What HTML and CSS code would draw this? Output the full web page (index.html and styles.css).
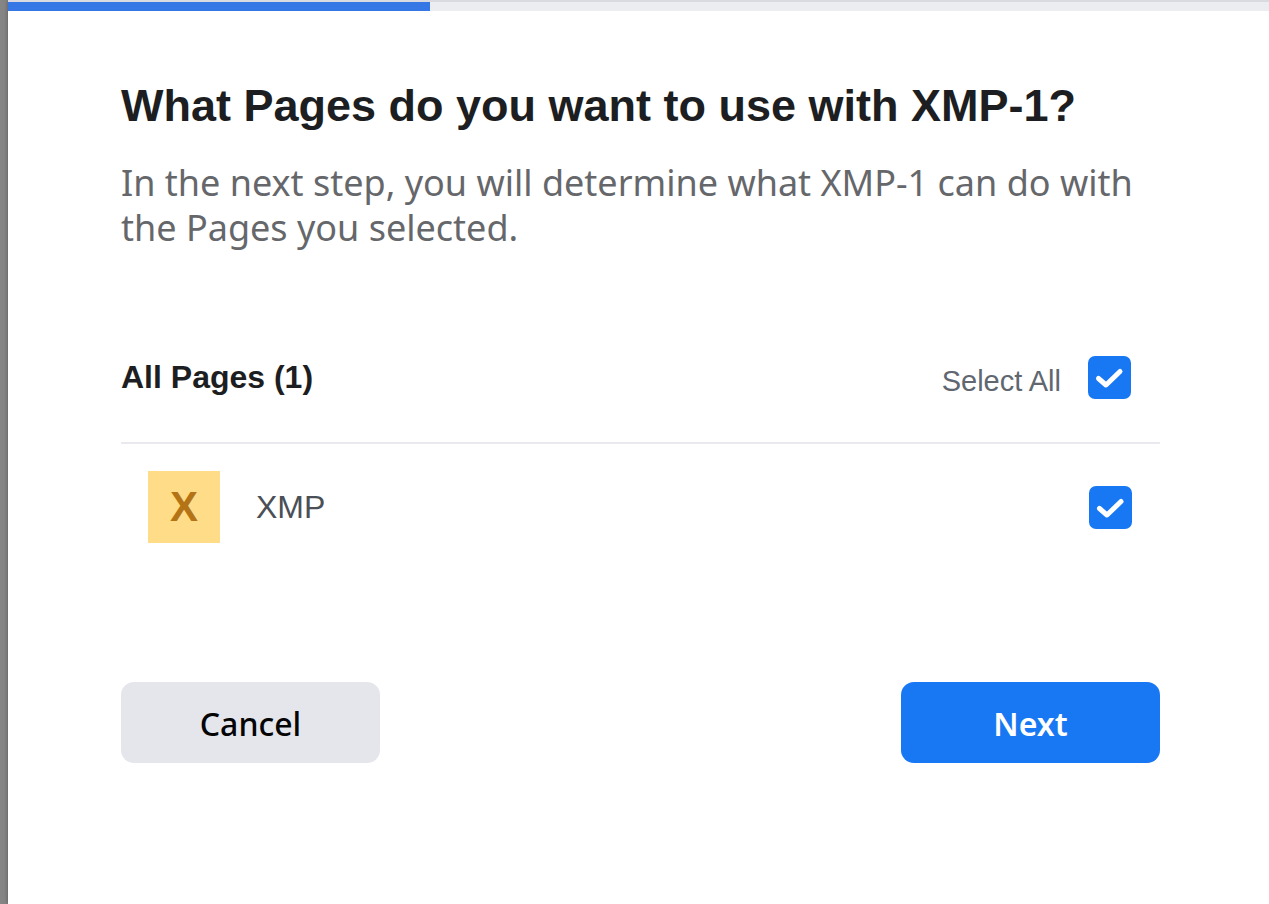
FILE: index.html
```
<!DOCTYPE html>
<html lang="en">
<head>
<meta charset="utf-8">
<title>Choose Pages</title>
<link rel="stylesheet" href="styles.css">
</head>
<body>
<div class="dialog">
  <div class="progress"><div class="progress-fill"></div></div>
  <main class="content">
    <h1 class="title">What Pages do you want to use with XMP-1?</h1>
    <p class="subtitle">In the next step, you will determine what XMP-1 can do with the Pages you selected.</p>
    <div class="list-head">
      <h2 class="list-title">All Pages (1)</h2>
      <label class="select-all" for="all">Select All</label>
      <span class="check">
        <input class="check-input" type="checkbox" id="all" checked>
        <svg class="check-mark" viewBox="0 0 43 43" aria-hidden="true"><path d="M10.500 22.500L18 29L32 15.500"/></svg>
      </span>
    </div>
    <div class="row">
      <span class="avatar" aria-hidden="true">X</span>
      <label class="page-name" for="xmp">XMP</label>
      <span class="check">
        <input class="check-input" type="checkbox" id="xmp" checked>
        <svg class="check-mark" viewBox="0 0 43 43" aria-hidden="true"><path d="M10.500 22.500L18 29L32 15.500"/></svg>
      </span>
    </div>
    <div class="actions">
      <button class="button button-cancel" type="button">Cancel</button>
      <button class="button button-next" type="button">Next</button>
    </div>
  </main>
</div>
</body>
</html>
```
FILE: styles.css
```
* { box-sizing: border-box; }
body {
  margin: 0;
  background: #858585;
  font-family: "Liberation Sans", Arial, sans-serif;
  color: #1c1e21;
}
.dialog {
  min-height: 100vh;
  margin-left: 8px;
  background: #fff;
  box-shadow: 0 0 4px #555;
}
.progress {
  height: 11px;
  background: #ebedf0;
  border-top: 2px solid #d9dbe0;
}
.progress-fill { width: 33.5%; height: 9px; background: #3578e5; }
.content { padding: 68px 109px 0 113px; }
.title { margin: 0; font-size: 45px; line-height: 54px; }
.subtitle {
  margin: 27px 0 0;
  font-family: "Noto Sans", sans-serif;
  font-size: 36px;
  line-height: 45px;
  color: #65676b;
}
.list-head {
  display: flex;
  align-items: center;
  height: 132px;
  margin-top: 62px;
  padding-right: 29px;
  border-bottom: 2px solid #e9eaef;
}
.list-title { margin: 0; flex: 1; font-size: 32px; line-height: 40px; }
.select-all { margin-right: 27px; padding-top: 8px; font-size: 29px; line-height: 36px; color: #606770; }
.check { position: relative; width: 43px; height: 43px; }
.check-input {
  appearance: none;
  display: block;
  width: 43px;
  height: 43px;
  margin: 0;
  background: #1877f2;
  border-radius: 7px;
}
.check-mark { position: absolute; inset: 0; pointer-events: none; }
.check-mark path { fill: none; stroke: #fff; stroke-width: 5; stroke-linecap: round; stroke-linejoin: round; }
.row { display: flex; align-items: center; padding: 27px 28px 0 27px; }
.avatar {
  width: 72px;
  height: 72px;
  margin-right: 36px;
  background: #ffdc87;
  color: #b47416;
  font-size: 42px;
  font-weight: bold;
  line-height: 72px;
  text-align: center;
}
.page-name { flex: 1; font-size: 32px; line-height: 40px; color: #4b4f56; }
.actions { display: flex; justify-content: space-between; margin-top: 139px; }
.button {
  width: 259px;
  height: 81px;
  padding: 2px 0 0;
  border: 0;
  border-radius: 13px;
  font: 600 32px "Noto Sans", sans-serif;
}
.button-cancel { background: #e4e6eb; color: #050505; font-weight: 500; }
.button-next { background: #1877f2; color: #fff; }
```
